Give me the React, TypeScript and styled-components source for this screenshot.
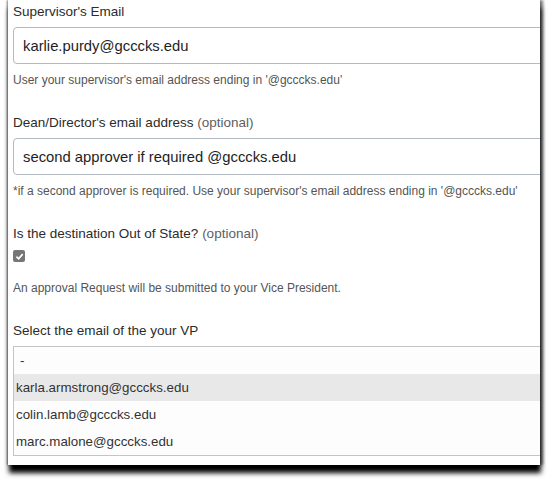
import React from "react";
import styled, { createGlobalStyle } from "styled-components";

const GlobalStyle = createGlobalStyle`
  html, body {
    margin: 0;
    padding: 0;
    background: #ffffff;
    font-family: "Liberation Sans", Arial, sans-serif;
  }
`;

const vpEmails = [
  "-",
  "karla.armstrong@gcccks.edu",
  "colin.lamb@gcccks.edu",
  "marc.malone@gcccks.edu",
];

const App = () => {
  return (
    <>
      <GlobalStyle />
      <Page>
        <Panel>
          <Field>
            <Label>Supervisor's Email</Label>
            <TextInput readOnly value="karlie.purdy@gcccks.edu" />
            <Help>User your supervisor's email address ending in '@gcccks.edu'</Help>
          </Field>

          <Field>
            <Label>
              Dean/Director's email address <Optional>(optional)</Optional>
            </Label>
            <TextInput readOnly value="second approver if required @gcccks.edu" />
            <Help>
              *if a second approver is required. Use your supervisor's email address
              ending in '@gcccks.edu'
            </Help>
          </Field>

          <Field>
            <Label>
              Is the destination Out of State? <Optional>(optional)</Optional>
            </Label>
            <CheckBox>
              <svg width="9" height="9" viewBox="0 0 10 10">
                <path
                  d="M1.6 5.2 L4 7.5 L8.5 2.4"
                  fill="none"
                  stroke="#ffffff"
                  strokeWidth="1.9"
                />
              </svg>
            </CheckBox>
            <Help spaced>An approval Request will be submitted to your Vice President.</Help>
          </Field>

          <Field>
            <Label>Select the email of the your VP</Label>
            <ListBox>
              {vpEmails.map((email, i) => (
                <ListOption key={email} selected={i === 1} placeholder={i === 0}>
                  {email}
                </ListOption>
              ))}
            </ListBox>
          </Field>
        </Panel>
      </Page>
    </>
  );
};

export default App;

const Page = styled.div`
  width: 549px;
  height: 482px;
  overflow: hidden;
  background: #ffffff;
`;

const Panel = styled.div`
  margin-left: 8px;
  width: 532px;
  height: 465px;
  box-sizing: border-box;
  padding: 2px 0 0 5px;
  background: #ffffff;
  overflow: hidden;
  box-shadow: -1px 0 2px rgba(0, 0, 0, 0.5), 3px 0 3px rgba(0, 0, 0, 0.55),
    1px 8px 5px rgba(0, 0, 0, 1);
`;

const Field = styled.div`
  display: flex;
  flex-flow: column nowrap;
  align-items: flex-start;
  margin-bottom: 25px;
`;

const Label = styled.div`
  font-size: 13.5px;
  line-height: 20px;
  color: #2b2b2b;
  white-space: nowrap;
`;

const Optional = styled.span`
  color: #606060;
`;

const TextInput = styled.input`
  margin-top: 5px;
  width: 560px;
  height: 37px;
  box-sizing: border-box;
  padding: 0 9px;
  border: 1px solid #b3b9c0;
  border-radius: 4px;
  font-family: "Liberation Sans", Arial, sans-serif;
  font-size: 14.8px;
  color: #1e1e1e;
  background: #ffffff;
  outline: none;
`;

const Help = styled.div<{ spaced?: boolean }>`
  margin-top: ${(props) => (props.spaced ? "18px" : "8px")};
  font-size: 12px;
  line-height: 16px;
  color: #555555;
  white-space: nowrap;
`;

const CheckBox = styled.span`
  margin-top: 6px;
  width: 12px;
  height: 12px;
  border-radius: 2px;
  background: #767676;
  display: flex;
  justify-content: center;
  align-items: center;
`;

const ListBox = styled.div`
  margin-top: 5px;
  width: 560px;
  border: 1px solid #c4c4c4;
  display: flex;
  flex-flow: column nowrap;
`;

const ListOption = styled.div<{ selected?: boolean; placeholder?: boolean }>`
  height: 27px;
  display: flex;
  align-items: center;
  padding-left: ${(props) => (props.placeholder ? "6px" : "2px")};
  font-size: 13.33px;
  color: #333333;
  background: ${(props) => (props.selected ? "#e8e8e8" : "#fdfdfd")};
`;
